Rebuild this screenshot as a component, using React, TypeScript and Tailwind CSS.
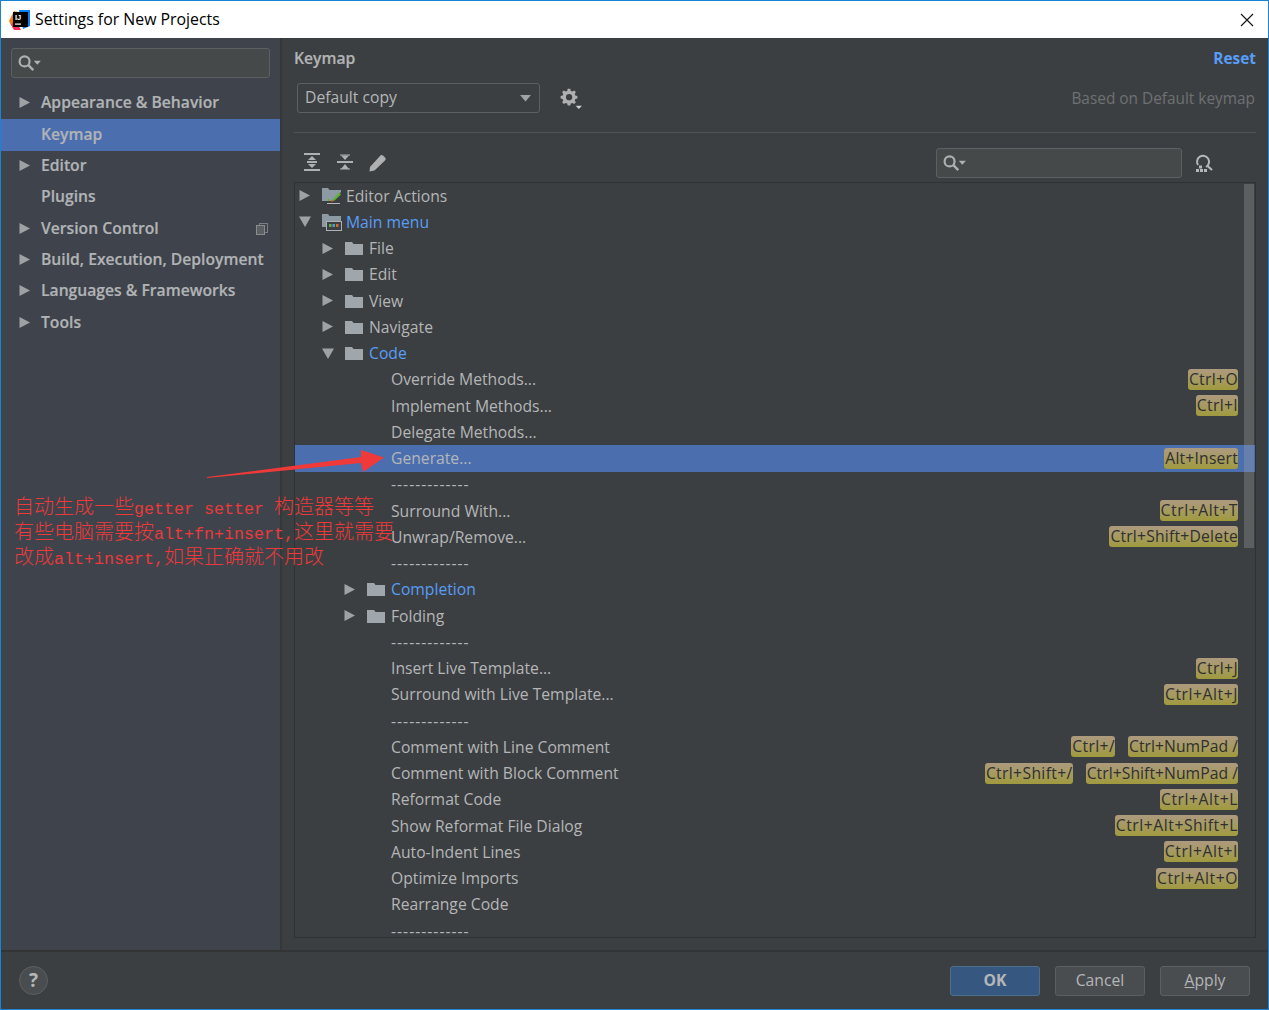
import React from "react";

type Row = { t: string; l?: number; arrow?: "r" | "d"; icon?: "folder" | "editor" | "menu"; blue?: boolean; keys?: string[]; sel?: boolean };

const rows: Row[] = [
  { t: "Editor Actions", l: 0, arrow: "r", icon: "editor" },
  { t: "Main menu", l: 0, arrow: "d", icon: "menu", blue: true },
  { t: "File", l: 1, arrow: "r", icon: "folder" },
  { t: "Edit", l: 1, arrow: "r", icon: "folder" },
  { t: "View", l: 1, arrow: "r", icon: "folder" },
  { t: "Navigate", l: 1, arrow: "r", icon: "folder" },
  { t: "Code", l: 1, arrow: "d", icon: "folder", blue: true },
  { t: "Override Methods...", keys: ["Ctrl+O"] },
  { t: "Implement Methods...", keys: ["Ctrl+I"] },
  { t: "Delegate Methods..." },
  { t: "Generate...", keys: ["Alt+Insert"], sel: true },
  { t: "-------------" },
  { t: "Surround With...", keys: ["Ctrl+Alt+T"] },
  { t: "Unwrap/Remove...", keys: ["Ctrl+Shift+Delete"] },
  { t: "-------------" },
  { t: "Completion", l: 2, arrow: "r", icon: "folder", blue: true },
  { t: "Folding", l: 2, arrow: "r", icon: "folder" },
  { t: "-------------" },
  { t: "Insert Live Template...", keys: ["Ctrl+J"] },
  { t: "Surround with Live Template...", keys: ["Ctrl+Alt+J"] },
  { t: "-------------" },
  { t: "Comment with Line Comment", keys: ["Ctrl+/", "Ctrl+NumPad /"] },
  { t: "Comment with Block Comment", keys: ["Ctrl+Shift+/", "Ctrl+Shift+NumPad /"] },
  { t: "Reformat Code", keys: ["Ctrl+Alt+L"] },
  { t: "Show Reformat File Dialog", keys: ["Ctrl+Alt+Shift+L"] },
  { t: "Auto-Indent Lines", keys: ["Ctrl+Alt+I"] },
  { t: "Optimize Imports", keys: ["Ctrl+Alt+O"] },
  { t: "Rearrange Code" },
  { t: "-------------" },
];

const side: { t: string; arrow?: boolean; sel?: boolean; copy?: boolean }[] = [
  { t: "Appearance & Behavior", arrow: true },
  { t: "Keymap", sel: true },
  { t: "Editor", arrow: true },
  { t: "Plugins" },
  { t: "Version Control", arrow: true, copy: true },
  { t: "Build, Execution, Deployment", arrow: true },
  { t: "Languages & Frameworks", arrow: true },
  { t: "Tools", arrow: true },
];

function Arrow({ d = "r", cls = "" }: { d?: "r" | "d"; cls?: string }) {
  return (
    <svg width="13" height="13" viewBox="0 0 13 13" className={cls}>
      {d === "r" ? <path d="M0.5 1 L11 6.5 L0.500 12 Z" fill="#9fa2a5" /> : <path d="M0 1.500 L12 1.500 L6 12 Z" fill="#9fa2a5" />}
    </svg>
  );
}

function Search() {
  return (
    <svg width="26" height="18" viewBox="0 0 24 16">
      <circle cx="7" cy="6.500" r="4.600" fill="none" stroke="#aeb0b2" strokeWidth="2" />
      <path d="M10.500 10 L15 14.500" stroke="#aeb0b2" strokeWidth="2.200" />
      <path d="M15.500 6 L22 6 L18.750 9.500 Z" fill="#aeb0b2" />
    </svg>
  );
}

function TreeIcon({ k }: { k: string }) {
  if (k === "folder")
    return (
      <svg width="18" height="14" viewBox="0 0 18 14">
        <path d="M0 1 H7 L8.500 3 H18 V14 H0 Z" fill="#9fa6ac" />
      </svg>
    );
  if (k === "editor")
    return (
      <svg width="20" height="18" viewBox="0 0 20 18">
        <path d="M0 1 H6 L7.500 3 H19 V5 L13 11 L9 14 H0 Z" fill="#8d9aa3" />
        <path d="M10 13 L17 5.500 L19 7.500 L12 14 Z" fill="#5fb03c" />
        <rect x="6" y="12" width="2" height="2" fill="#5fb03c" />
        <rect x="9" y="13" width="2" height="1.500" fill="#d9662f" />
        <rect x="5" y="16" width="13" height="1" fill="#b4b7b9" />
      </svg>
    );
  return (
    <svg width="20" height="18" viewBox="0 0 20 18">
      <path d="M0 1 H6 L7.500 3 H19 V14 H0 Z" fill="#8d9aa3" />
      <rect x="4.500" y="8.500" width="15" height="9" fill="#3c3f41" stroke="#aeb1b3" />
      <rect x="7" y="11" width="2.500" height="3" fill="#5fb03c" />
      <rect x="10.500" y="11" width="2.500" height="3" fill="#4b9fd8" />
      <rect x="14" y="11" width="2.500" height="3" fill="#d9662f" />
    </svg>
  );
}

function Key({ k }: { k: string }) {
  const track = k.includes("NumPad")
    ? "tracking-[0.05px]"
    : k.includes("Delete") || k.includes("Insert")
      ? "tracking-[0.2px]"
      : k.includes("Alt")
        ? "tracking-[0.55px]"
        : "tracking-[0.35px]";
  return (
    <span className={`h-[21px] leading-[20px] rounded-[3px] bg-gradient-to-b from-[#ad9a7e] to-[#a09a3c] text-[#2f3030] text-[15.7px] whitespace-pre pl-[1px] ${track}`}>
      {k}
    </span>
  );
}

function TreeRow({ r }: { r: Row }) {
  const l = r.l ?? 2;
  const indent = l === 0 ? "pl-[4px]" : l === 1 ? "pl-[27px]" : "pl-[49px]";
  const dash = r.t.startsWith("---");
  return (
    <div className={`h-[26.25px] flex items-center shrink-0 relative ${indent} ${r.sel ? "bg-[#4b6eaf] shadow-[0_-1px_0_#4b6eaf]" : ""}`}>
      <span className="w-[23px] shrink-0 flex items-center mt-[-1px]">{r.arrow && <Arrow d={r.arrow} />}</span>
      <span className="w-[24px] shrink-0 flex items-center mt-[-1px]">{r.icon && <TreeIcon k={r.icon} />}</span>
      <span className={`text-[15.7px] leading-[22px] mt-[-1px] whitespace-pre ${dash ? "tracking-[1px]" : ""} ${r.blue ? "text-[#589df6]" : "text-[#b4b6b8]"}`}>{r.t}</span>
      <span className="ml-auto mr-[17px] flex gap-[13px] mt-[-1px]">
        {r.keys?.map((k) => <Key key={k} k={k} />)}
      </span>
    </div>
  );
}

function Note({ children }: { children: React.ReactNode }) {
  return <div className="h-[25px] leading-[25px] text-[20px] whitespace-pre">{children}</div>;
}
const M = ({ children }: { children: string }) => (
  <span className="text-[16.67px] font-['Liberation_Mono']">{children}</span>
);

export default function App() {
  return (
    <div className="w-[1269px] h-[1010px] flex flex-col border border-[#1883d7] font-['Open_Sans','Noto_Sans',sans-serif] relative overflow-hidden bg-[#3c3f41]">
      {/* title bar */}
      <div className="h-[37px] bg-white flex items-center shrink-0 pl-[8px] pr-[14px]">
        <svg width="22" height="22" viewBox="0 0 22 22">
          <path d="M0 12 L5 2 L9 3 L5 17 L2 16 Z" fill="#f97a12" />
          <path d="M2 16 L6 10 L12 21 L5 21 Z" fill="#fe2857" />
          <path d="M10 1 L21 1 L21 17 L14 20 Z" fill="#087cfa" />
          <rect x="4" y="3" width="15" height="15" fill="#000" />
          <text x="6" y="11" fontSize="7.500" fontWeight="700" fill="#fff" fontFamily="Liberation Sans">IJ</text>
          <rect x="6" y="14.500" width="6" height="1.200" fill="#fff" />
        </svg>
        <span className="ml-[4px] text-[15.85px] text-black">Settings for New Projects</span>
        <svg width="14" height="14" viewBox="0 0 14 14" className="ml-auto">
          <path d="M1 1 L13 13 M13 1 L1 13" stroke="#111" strokeWidth="1.100" />
        </svg>
      </div>

      <div className="flex flex-1 min-h-0">
        {/* sidebar */}
        <div className="w-[279px] shrink-0 bg-[#3e434c] flex flex-col">
          <div className="mx-[10px] mt-[10px] h-[30px] shrink-0 rounded-[3px] border border-[#5d6062] bg-[#45494a] flex items-center pl-[5px]">
            <Search />
          </div>
          <div className="mt-[10px] flex flex-col">
            {side.map((s) => (
              <div key={s.t} className={`h-[31.35px] flex items-center pl-[18px] pr-[12px] ${s.sel ? "bg-[#4b6eaf]" : ""}`}>
                <span className="w-[22px] shrink-0 flex items-center mt-[-2px]">{s.arrow && <Arrow />}</span>
                <span className="text-[15.7px] leading-[22px] mt-[-3px] font-semibold [-webkit-text-stroke:0.2px_#b1b3b5] text-[#b1b3b5] whitespace-pre">{s.t}</span>
                {s.copy && (
                  <svg width="12" height="12" viewBox="0 0 12 12" className="ml-auto">
                    <rect x="3.500" y="0.500" width="8" height="9" fill="none" stroke="#7c7f81" />
                    <rect x="0.500" y="2.500" width="8" height="9" fill="#5d6062" stroke="#8a8d8f" />
                  </svg>
                )}
              </div>
            ))}
          </div>
        </div>
        <div className="w-[2px] shrink-0 bg-[#353739]" />

        {/* main */}
        <div className="flex-1 min-w-0 flex flex-col pl-[12px] pr-[12px]">
          <div className="flex items-center justify-between h-[20px] mt-[11px] shrink-0">
            <span className="text-[15.7px] font-semibold [-webkit-text-stroke:0.2px_#b1b3b5] text-[#b1b3b5]">Keymap</span>
            <span className="text-[15.4px] font-bold text-[#589df6]">Reset</span>
          </div>
          <div className="flex items-center mt-[14px] h-[30px] shrink-0 pl-[3px]">
            <div className="w-[243px] h-[30px] rounded-[3px] border border-[#5d6062] flex items-center px-[7px] text-[15.7px] text-[#b4b6b8]">
              <span className="mt-[-1px]">Default copy</span>
              <svg width="11" height="7" viewBox="0 0 11 7" className="ml-auto mr-[1px]"><path d="M0 0 H11 L5.500 6.500 Z" fill="#a0a2a4" /></svg>
            </div>
            <svg width="23" height="23" viewBox="0 0 22 22" className="ml-[20px] mt-[3px]">
              <path d="M9 1 h3 l.6 2.400 l1.700.7 L16.500 2.800 l2 2 l-1.300 2.200 l.7 1.700 L20.300 9.300 v2.900 l-2.400.6 l-.7 1.700 l1.300 2.200 l-2 2 l-2.200-1.300 l-1.700.7 L12 20.500 H9 l-.6-2.400 l-1.700-.7 L4.500 18.700 l-2-2 l1.300-2.200 l-.7-1.700 L.7 12.200 V9.300 l2.400-.6 l.7-1.700 L2.500 4.800 l2-2 l2.200 1.300 l1.700-.7 Z" fill="#aeb0b2" transform="scale(0.82)" />
              <circle cx="8.700" cy="8.800" r="3" fill="#3c3f41" />
              <path d="M15 17 h6 l-3 3 Z" fill="#d0d2d4" />
            </svg>
            <span className="ml-auto text-[15.4px] text-[#6e7173] pr-[1px] mt-[1px]">Based on Default keymap</span>
          </div>
          <div className="h-px bg-[#505254] mt-[19px] shrink-0" />
          <div className="flex items-center h-[30px] mt-[15px] shrink-0">
            <svg width="90" height="20" viewBox="0 0 90 20" className="ml-[10px] mt-[-2px]">
              <g fill="#aeb0b2">
                <rect x="0" y="1" width="16" height="2" /><rect x="0" y="17" width="16" height="2" /><rect x="3" y="9" width="10" height="2" />
                <path d="M8 4 L12 8 H4 Z M8 16 L4 12 H12 Z" />
                <rect x="33" y="9" width="16" height="2" /><rect x="36" y="2.500" width="10" height="1" />
                <path d="M41 8 L37 3.500 H45 Z M41 12 L45 17 H37 Z" />
                <rect x="36" y="16.500" width="10" height="1" />
                <path d="M66 15 L76 4 Q77 2.500 79 3.500 L81.500 6 Q82 7.500 81 8.500 L70.500 18.500 L65.500 19.500 Z" />
              </g>
            </svg>
            <div className="ml-[542px] w-[246px] h-[30px] rounded-[3px] border border-[#5d6062] bg-[#45494a] flex items-center pl-[5px]">
              <Search />
            </div>
            <svg width="20" height="20" viewBox="0 0 20 20" className="ml-[13px]">
              <path d="M3 12 A6 6 0 1 1 11 14" fill="none" stroke="#b4b6b8" strokeWidth="2" />
              <path d="M12 12.500 L17 17" stroke="#b4b6b8" strokeWidth="2.200" />
              <g fill="#b4b6b8"><rect x="1" y="16" width="3" height="3" /><rect x="5" y="16" width="3" height="3" /><rect x="9" y="16" width="3" height="3" /><rect x="4" y="12.500" width="3" height="3" /></g>
            </svg>
          </div>
          <div className="mt-[4px] h-[756px] shrink-0 border border-[#2f3133] flex flex-col relative overflow-hidden">
            {rows.map((r, i) => <TreeRow key={i} r={r} />)}
            <div className="absolute top-[1px] right-[1px] w-[10px] h-[364px] bg-[#a8a8a8]/30" />
          </div>
        </div>
      </div>

      {/* footer */}
      <div className="h-[59px] shrink-0 border-t-2 border-[#323436] flex items-center pl-[18px] pr-[18px] bg-[#3c3f41]">
        <div className="w-[29px] h-[29px] rounded-full border border-[#5d6062] bg-[#4a4d4f] flex items-center justify-center text-[19px] font-bold text-[#b4b6b8]">?</div>
        <div className="ml-auto flex gap-[15px]">
          <div className="w-[90px] h-[30px] rounded-[3px] border border-[#4c708c] bg-[#365880] flex items-center justify-center text-[15.7px] font-bold text-[#b4b6b8]">OK</div>
          <div className="w-[90px] h-[30px] rounded-[3px] border border-[#5d6062] bg-[#4a4d4f] flex items-center justify-center text-[15.7px] text-[#b4b6b8]">Cancel</div>
          <div className="w-[90px] h-[30px] rounded-[3px] border border-[#5d6062] bg-[#4a4d4f] flex items-center justify-center text-[15.7px] text-[#b4b6b8]"><span className="underline">A</span>pply</div>
        </div>
      </div>

      {/* annotation overlays */}
      <svg width="190" height="34" viewBox="0 0 190 34" className="absolute left-[205px] top-[447px]">
        <path d="M1 30 L155 15 L157 24 L178 9.500 L155 2 L155 9 L1 29 Z" fill="#f03a3a" />
      </svg>
      <div className="absolute left-[13px] top-[492px] text-[#ec3a3a] font-['Noto_Sans_CJK_SC',sans-serif] font-light">
        <Note>自动生成一些<M>getter setter </M>构造器等等</Note>
        <Note>有些电脑需要按<M>alt+fn+insert,</M>这里就需要</Note>
        <Note>改成<M>alt+insert,</M>如果正确就不用改</Note>
      </div>
    </div>
  );
}
